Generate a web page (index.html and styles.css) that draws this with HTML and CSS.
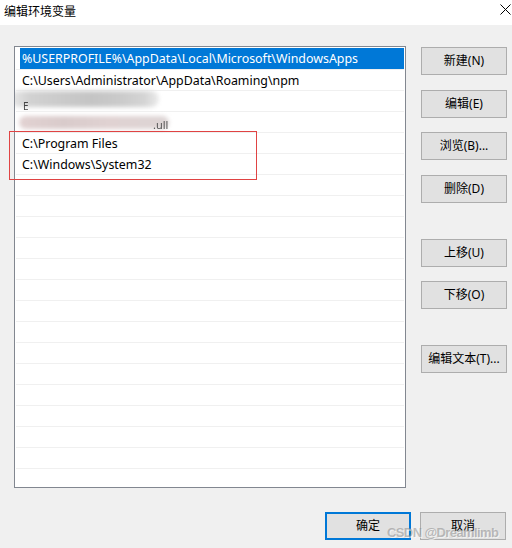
FILE: index.html
```html
<!DOCTYPE html>
<html lang="zh-CN">
<head>
<meta charset="utf-8">
<title>编辑环境变量</title>
<link rel="stylesheet" href="styles.css">
</head>
<body>
<div class="window">
  <div class="titlebar">
    <span class="title">编辑环境变量</span>
    <svg class="close" width="11" height="11" viewBox="0 0 11 11"><path d="M0.5 0.5 L10.5 10.5 M10.5 0.5 L0.5 10.5" stroke="#000" stroke-width="1" fill="none"/></svg>
  </div>
  <div class="body">
    <div class="main">
      <div class="listbox">
        <div class="row selected"><span class="text">%USERPROFILE%\AppData\Local\Microsoft\WindowsApps</span></div>
        <div class="row"><span class="text">C:\Users\Administrator\AppData\Roaming\npm</span></div>
        <div class="row"><span class="blur blur-gray"></span><span class="glyph">E</span></div>
        <div class="row"><span class="blur blur-pink"></span><span class="tail">.ull</span></div>
        <div class="row"><span class="text">C:\Program Files</span></div>
        <div class="row"><span class="text">C:\Windows\System32</span></div>
        <div class="row"></div><div class="row"></div><div class="row"></div><div class="row"></div>
        <div class="row"></div><div class="row"></div><div class="row"></div><div class="row"></div>
        <div class="row"></div><div class="row"></div><div class="row"></div><div class="row"></div>
        <div class="row"></div><div class="row"></div>
      </div>
      <div class="buttons">
        <button class="btn">新建(N)</button>
        <button class="btn gap-s">编辑(E)</button>
        <button class="btn gap-t">浏览(B)...</button>
        <button class="btn gap-s">删除(D)</button>
        <button class="btn gap-l">上移(U)</button>
        <button class="btn gap-t">下移(O)</button>
        <button class="btn gap-l">编辑文本(T)...</button>
      </div>
    </div>
    <div class="footer">
      <button class="btn primary">确定</button>
      <button class="btn">取消</button>
    </div>
  </div>
  <div class="annot"></div>
  <div class="watermark">CSDN @Dreamlimb</div>
</div>
</body>
</html>
```

FILE: styles.css
```css
html, body {
  margin: 0;
  padding: 0;
  background: #f0f0f0;
}
.window {
  position: relative;
  width: 512px;
  height: 548px;
  overflow: hidden;
  font-family: "Noto Sans", "Noto Sans CJK SC", sans-serif;
  font-size: 12px;
  color: #000;
}
.titlebar {
  height: 25px;
  background: #fff;
  display: flex;
  align-items: center;
  justify-content: space-between;
  padding: 0 1px 0 4px;
  box-sizing: border-box;
}
.title {
  font-family: "Noto Sans CJK SC", sans-serif;
  font-size: 12px;
  line-height: 14px;
  margin-top: -3px;
}
.close {
  display: block;
  margin-top: -7px;
}
.body {
  padding: 21px 5px 0 14px;
}
.main {
  display: flex;
  gap: 15px;
}
.listbox {
  width: 392px;
  height: 442px;
  box-sizing: border-box;
  border: 1px solid #828790;
  background: #fff;
  padding: 2px 0 0 1px;
  overflow: hidden;
}
.row {
  position: relative;
  height: 20px;
  border-bottom: 1px solid #f0f0f0;
  margin-right: 1px;
  display: flex;
  align-items: center;
  white-space: nowrap;
}
.row .text {
  padding-left: 6px;
  line-height: 20px;
  padding-top: 1px;
  font-size: 12.4px;
}
.row.selected .text {
  background: #0078d7;
  color: #fff;
  margin-left: 4px;
  padding-left: 2px;
  flex: 1;
  height: 20px;
  margin-top: -1px;
}
.blur {
  position: absolute;
  display: block;
  filter: blur(2px);
  border-radius: 8px;
}
.blur-gray {
  left: -5px;
  top: 0px;
  width: 148px;
  height: 16px;
  background: linear-gradient(90deg, #e8e8e8 0%, #d2d2d2 12%, #cacaca 35%, #c4c4c4 55%, #cbcbcb 75%, #d4d4d4 90%, #ebebeb 100%);
}
.blur-pink {
  left: 3px;
  top: 4px;
  width: 150px;
  height: 13px;
  background: linear-gradient(90deg, #e2d2d2 0%, #d9cbcb 30%, #e0d2d2 60%, #ddd5d5 100%);
}
.glyph {
  position: relative;
  margin-left: 7px;
  margin-top: 10px;
  font-size: 10px;
  color: #444;
  filter: blur(0.4px);
}
.tail {
  position: relative;
  margin-left: 137px;
  margin-top: 4px;
  font-size: 11px;
  color: #555;
  filter: blur(0.5px);
}
.buttons {
  display: flex;
  flex-direction: column;
  padding-top: 1px;
  width: 86px;
}
.btn {
  width: 86px;
  height: 28px;
  box-sizing: border-box;
  background: #e1e1e1;
  border: 1px solid #adadad;
  font-family: "Noto Sans", "Noto Sans CJK SC", sans-serif;
  font-size: 12px;
  color: #000;
  padding: 0;
  margin: 0;
  line-height: 1;
}
.gap-s { margin-top: 15px; }
.gap-t { margin-top: 14px; }
.gap-l { margin-top: 36px; }
.footer {
  display: flex;
  justify-content: flex-end;
  gap: 9px;
  margin-top: 24px;
  padding-right: 1px;
}
.btn.primary {
  border: 2px solid #0078d7;
}
.annot {
  position: absolute;
  left: 9px;
  top: 131px;
  width: 248px;
  height: 49px;
  box-sizing: border-box;
  border: 1px solid #e04343;
}
.watermark {
  position: absolute;
  left: 387px;
  top: 525px;
  font-family: "Liberation Sans", sans-serif;
  font-size: 13px;
  font-weight: bold;
  color: rgba(140, 140, 140, 0.55);
  text-shadow: 1px 1px 0 rgba(255, 255, 255, 0.6);
  letter-spacing: -0.6px;
  white-space: nowrap;
}
```
